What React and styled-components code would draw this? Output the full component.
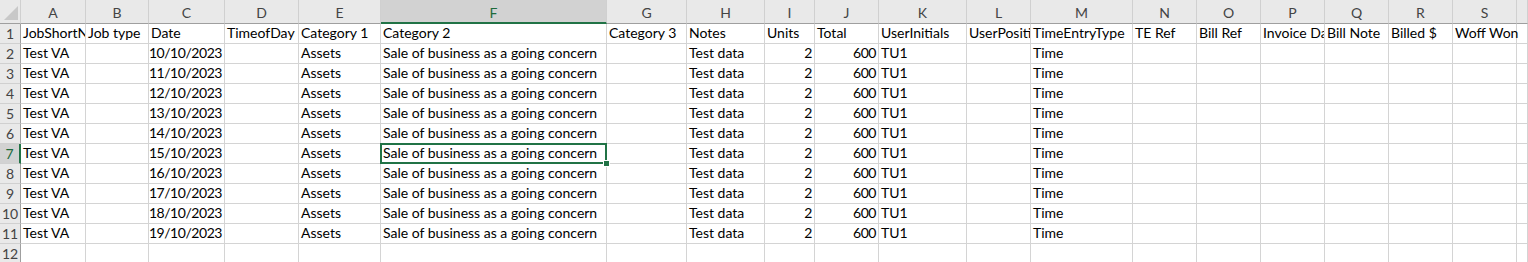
import React from "react";
import styled, { createGlobalStyle, css } from "styled-components";

const GlobalStyle = createGlobalStyle`
  html, body {
    margin: 0;
    padding: 0;
    background: #ffffff;
  }
  body {
    font-family: Lato, "Liberation Sans", sans-serif;
  }
`;

const columns = [
  { id: "A", width: 65 },
  { id: "B", width: 63 },
  { id: "C", width: 76 },
  { id: "D", width: 74 },
  { id: "E", width: 82 },
  { id: "F", width: 226 },
  { id: "G", width: 80 },
  { id: "H", width: 78 },
  { id: "I", width: 50 },
  { id: "J", width: 64 },
  { id: "K", width: 88 },
  { id: "L", width: 64 },
  { id: "M", width: 102 },
  { id: "N", width: 64 },
  { id: "O", width: 64 },
  { id: "P", width: 64 },
  { id: "Q", width: 64 },
  { id: "R", width: 64 },
  { id: "S", width: 64 },
];

const headings = [
  "JobShortName",
  "Job type",
  "Date",
  "TimeofDay",
  "Category 1",
  "Category 2",
  "Category 3",
  "Notes",
  "Units",
  "Total",
  "UserInitials",
  "UserPosition",
  "TimeEntryType",
  "TE Ref",
  "Bill Ref",
  "Invoice Date",
  "Bill Note",
  "Billed $",
  "Woff Won",
];

const SELECTED = { row: 7, col: "F" };

function makeRow(day) {
  return [
    "Test VA",
    "",
    { value: `${day}/10/2023`, number: true },
    "",
    "Assets",
    "Sale of business as a going concern",
    "",
    "Test data",
    { value: "2", number: true },
    { value: "600", number: true },
    "TU1",
    "",
    "Time",
    "",
    "",
    "",
    "",
    "",
    "",
  ];
}

const rows = [
  headings,
  ...[10, 11, 12, 13, 14, 15, 16, 17, 18, 19].map(makeRow),
  columns.map(() => ""),
];

const textOf = (cell) => (typeof cell === "string" ? cell : cell.value);

export default function App() {
  const template = `21px ${columns.map((c) => `${c.width}px`).join(" ")} 1fr`;

  return (
    <React.Fragment>
      <GlobalStyle />
      <Sheet style={{ gridTemplateColumns: template }}>
        <Corner>
          <svg width="14" height="14" viewBox="0 0 14 14">
            <polygon points="14,0 14,14 0,14" fill="#c8c8c8" />
          </svg>
        </Corner>
        {columns.map((c) => (
          <ColHeader key={c.id} active={c.id === SELECTED.col}>
            {c.id}
          </ColHeader>
        ))}
        <ColHeader />

        {rows.map((cells, r) => {
          const rowNum = r + 1;
          return (
            <React.Fragment key={rowNum}>
              <RowHeader active={rowNum === SELECTED.row}>{rowNum}</RowHeader>
              {cells.map((cell, i) => {
                const value = textOf(cell);
                const number = typeof cell === "object" && cell.number;
                const next = cells[i + 1];
                // text spills into the next cell when that one is empty, as in Excel
                const spill = number || next === undefined || textOf(next) === "";
                const selected =
                  rowNum === SELECTED.row && columns[i].id === SELECTED.col;
                return (
                  <Cell
                    key={i}
                    number={number}
                    spill={spill}
                    selected={selected}
                  >
                    <CellText number={number}>{value}</CellText>
                    {selected && <FillHandle />}
                  </Cell>
                );
              })}
              <Cell />
            </React.Fragment>
          );
        })}
      </Sheet>
    </React.Fragment>
  );
}

const Sheet = styled.div`
  display: grid;
  grid-template-rows: 24px;
  grid-auto-rows: 20px;
  width: 1528px;
  height: 262px;
  overflow: hidden;
  font-size: 14px;
  color: #000000;
  background: #ffffff;
`;

const headerBase = css`
  box-sizing: border-box;
  background: #e9e9e9;
  color: #444444;
  display: flex;
  align-items: center;
  justify-content: center;
  font-size: 14px;
  border-right: 1px solid #d0d0d0;
`;

const Corner = styled.div`
  ${headerBase};
  border-bottom: 1px solid #9f9f9f;
  align-items: flex-end;
  justify-content: flex-end;
  padding: 0 2px 3px 0;
`;

const ColHeader = styled.div`
  ${headerBase};
  padding-top: 1px;
  border-bottom: 1px solid #9f9f9f;
  ${(p) =>
    p.active &&
    css`
      background: #d2d2d2;
      color: #1e6b3c;
      border-bottom: 2px solid #217346;
      padding-top: 2px;
    `}
`;

const RowHeader = styled.div`
  ${headerBase};
  border-bottom: 1px solid #d0d0d0;
  border-right: 1px solid #9f9f9f;
  ${(p) =>
    p.active &&
    css`
      background: #d2d2d2;
      color: #1e6b3c;
      border-right: 2px solid #217346;
    `}
`;

const Cell = styled.div`
  position: relative;
  box-sizing: border-box;
  border-right: 1px solid #d4d4d4;
  border-bottom: 1px solid #d4d4d4;
  display: flex;
  align-items: flex-end;
  justify-content: ${(p) => (p.number ? "flex-end" : "flex-start")};
  padding: 0 2px 1px 2px;
  overflow: ${(p) => (p.spill ? "visible" : "hidden")};
  white-space: nowrap;

  ${(p) =>
    p.selected &&
    css`
      overflow: visible;
      &::after {
        content: "";
        position: absolute;
        left: -1px;
        top: -1px;
        right: -1px;
        bottom: -1px;
        border: 2px solid #217346;
        pointer-events: none;
      }
    `}
`;

const CellText = styled.span`
  line-height: 18px;
  letter-spacing: ${(p) => (p.number ? "-0.45px" : "0")};
`;

const FillHandle = styled.span`
  position: absolute;
  right: -4px;
  bottom: -4px;
  width: 5px;
  height: 5px;
  background: #217346;
  border: 1px solid #ffffff;
  z-index: 2;
`;
